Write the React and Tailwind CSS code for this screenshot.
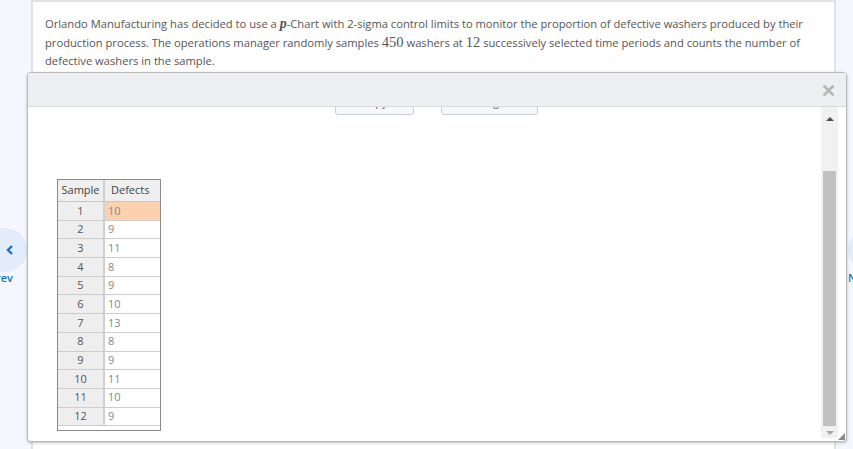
import React from "react";

const rows = [
  [1, 10], [2, 9], [3, 11], [4, 8], [5, 9], [6, 10],
  [7, 13], [8, 8], [9, 9], [10, 11], [11, 10], [12, 9],
];

export default function App() {
  return (
    <div
      className="relative w-[853px] h-[449px] overflow-hidden bg-[#f4f7fd]"
      style={{ fontFamily: '"Open Sans", "Noto Sans", sans-serif' }}
    >
      {/* question card */}
      <div className="ml-[31px] w-[805px] h-[520px] bg-white border-2 border-[#e2e2e2]">
        <p className="pl-[12px] pr-[14px] pt-[13px] text-[11.2px] leading-[18.5px] text-[#555]">
          Orlando Manufacturing has decided to use a{" "}
          <span className="italic font-bold text-[14px] leading-none" style={{ fontFamily: '"Liberation Serif", serif' }}>p</span>
          -Chart with 2-sigma control limits to monitor the proportion of defective washers produced by their
          production process. The operations manager randomly samples{" "}
          <span className="text-[14.5px] leading-none" style={{ fontFamily: '"Liberation Serif", serif' }}>450</span>{" "}
          washers at{" "}
          <span className="text-[14.5px] leading-none" style={{ fontFamily: '"Liberation Serif", serif' }}>12</span>
          {" "}successively selected time periods and counts the number of defective washers in the sample.
        </p>
      </div>

      {/* prev nav */}
      <div className="absolute left-[-17px] top-[228px] w-[44px] h-[44px] rounded-full bg-[#e2ecfb] flex items-center justify-end pr-[13px]">
        <svg width="8" height="10" viewBox="0 0 8 10">
          <path d="M6 1 L2 5 L6 9" fill="none" stroke="#1a6fc0" strokeWidth="2.4" />
        </svg>
      </div>
      <div className="absolute left-[-4px] top-[270px] text-[11px] font-semibold text-[#1a6fc0]">rev</div>
      {/* next nav */}
      <div className="absolute left-[848px] top-[228px] w-[44px] h-[44px] rounded-full bg-[#e2ecfb]" />
      <div className="absolute left-[848px] top-[270px] text-[11px] font-semibold text-[#1a6fc0]">N</div>

      {/* dialog */}
      <div className="absolute left-[27px] top-[72px] w-[820px] h-[370px] bg-white border border-[#b9b9b9] rounded-[4px] shadow-[0_1px_3px_rgba(0,0,0,0.25)] flex flex-col overflow-hidden">
        <div className="h-[34px] shrink-0 bg-[#eeeff3] border-b border-[#d8dae0] flex items-center justify-end pr-[10px]">
          <span className="text-[18px] font-bold text-[#b5b5b5] leading-none">✕</span>
        </div>
        <div className="flex-1 flex relative overflow-hidden">
          <div className="flex-1 relative">
            {/* buttons partially scrolled */}
            <div className="absolute left-[307px] top-[-14px] w-[79px] h-[22px] border border-[#c9ccd3] rounded-[3px] bg-[#f7f8fa] flex justify-center">
              <span className="text-[11px] text-[#666] leading-[12px] mt-[2px]">Copy</span>
            </div>
            <div className="absolute left-[413px] top-[-14px] w-[97px] h-[22px] border border-[#c9ccd3] rounded-[3px] bg-[#f7f8fa] flex justify-center">
              <span className="text-[11px] text-[#666] leading-[12px] mt-[2px]">Image</span>
            </div>

            {/* table */}
            <div className="ml-[29px] mt-[72px] w-[104px] border border-[#8a8a8a] text-[11px]">
              <div className="flex h-[22px] border-b border-[#c8c8c8]">
                <div className="w-[47px] bg-[#efefef] text-[#444] flex items-center justify-center border-r-2 border-[#cfcfcf]">Sample</div>
                <div className="flex-1 bg-[#efefef] text-[#444] flex items-center pl-[6px]">Defects</div>
              </div>
              {rows.map(([s, d], i) => (
                <div key={s} className="flex h-[18.7px] border-b border-[#cccccc]">
                  <div className="w-[47px] bg-[#eeeeee] text-[#555] flex items-center justify-center border-r-2 border-[#cfcfcf]">{s}</div>
                  <div className={`flex-1 flex items-center pl-[3px] text-[#888] ${i === 0 ? "bg-[#fdd1b0]" : "bg-white"}`}>{d}</div>
                </div>
              ))}
              <div className="flex h-[4px]">
                <div className="w-[47px]" />
              </div>
            </div>
          </div>
          {/* scrollbar */}
          <div className="w-[17px] mr-[8px] mb-[3px] bg-[#f1f1f1] flex flex-col items-center">
            <div className="h-[14px] flex items-end justify-center">
              <div className="w-0 h-0 border-l-[4px] border-r-[4px] border-b-[4px] border-l-transparent border-r-transparent border-b-[#505050]" />
            </div>
            <div className="mt-[50px] w-[13px] h-[255px] bg-[#c1c1c1]" />
            <div className="mt-[5px] w-0 h-0 border-l-[4px] border-r-[4px] border-t-[4px] border-l-transparent border-r-transparent border-t-[#a8a8a8]" />
          </div>
          <svg className="absolute right-[1px] bottom-[1px]" width="7" height="7" viewBox="0 0 7 7">
            <path d="M7 0 L7 7 L0 7 Z" fill="#8a8a8a" />
          </svg>
        </div>
      </div>
    </div>
  );
}
